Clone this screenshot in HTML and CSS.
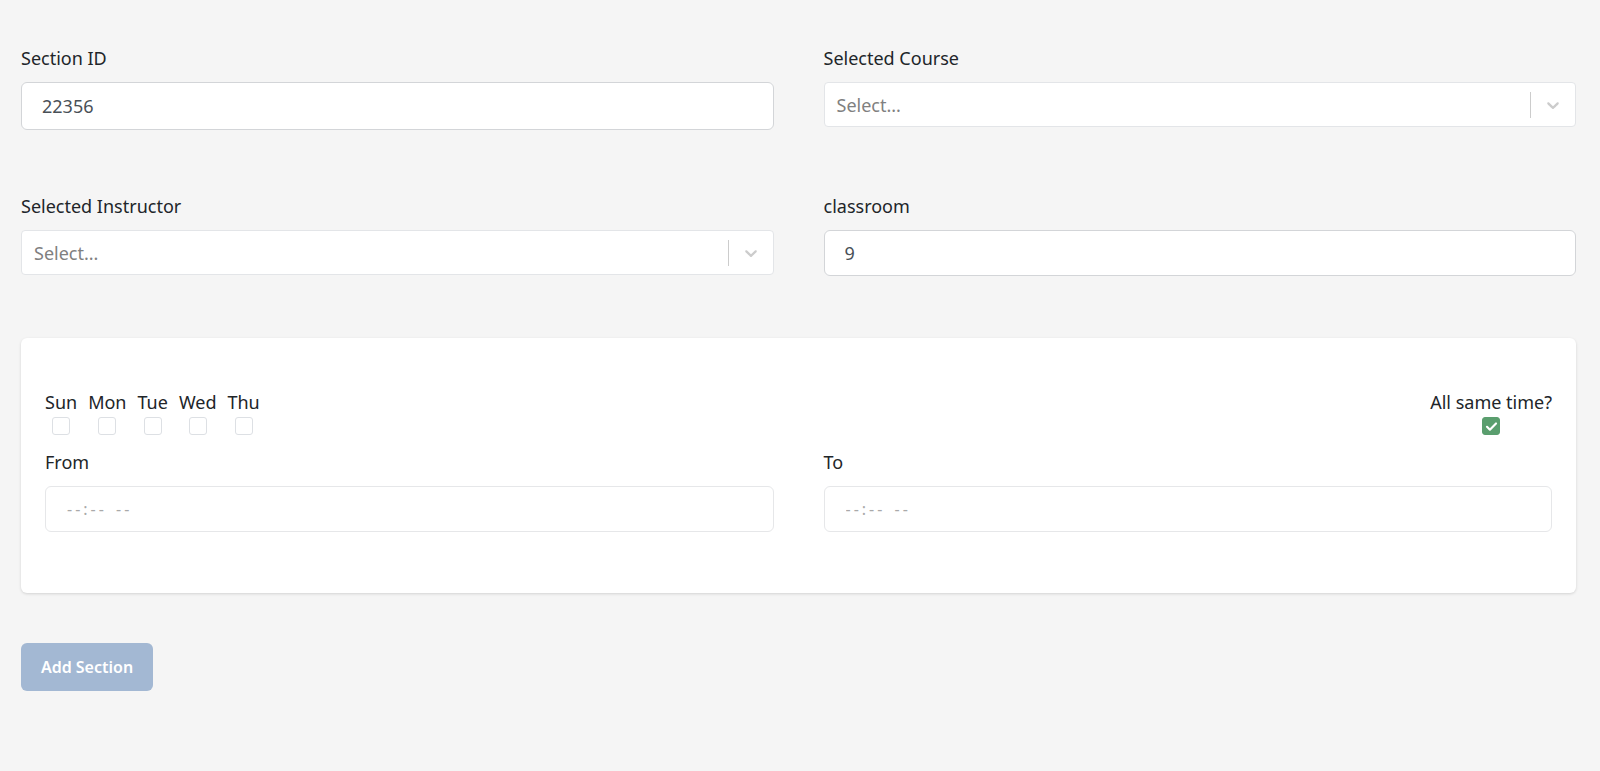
FILE: index.html
```html
<!DOCTYPE html>
<html lang="en">
<head>
<meta charset="utf-8">
<title>Add Section</title>
<link rel="stylesheet" href="styles.css">
</head>
<body>
<main class="page">
  <div class="row">
    <div class="field">
      <label class="label">Section ID</label>
      <input class="text-input tall" type="text" value="22356">
    </div>
    <div class="field">
      <label class="label">Selected Course</label>
      <div class="select">
        <span class="select-placeholder">Select...</span>
        <span class="select-sep"></span>
        <span class="select-arrow"><svg viewBox="0 0 20 20" width="20" height="20"><path d="M4.516 7.548c0.436-0.446 1.043-0.481 1.576 0l3.908 3.747 3.908-3.747c0.533-0.481 1.141-0.446 1.574 0 0.436 0.445 0.408 1.197 0 1.615-0.406 0.418-4.695 4.502-4.695 4.502-0.217 0.223-0.502 0.335-0.787 0.335s-0.57-0.112-0.789-0.335c0 0-4.287-4.084-4.695-4.502s-0.436-1.170 0-1.615z"/></svg></span>
      </div>
    </div>
  </div>
  <div class="row row-2">
    <div class="field">
      <label class="label">Selected Instructor</label>
      <div class="select">
        <span class="select-placeholder">Select...</span>
        <span class="select-sep"></span>
        <span class="select-arrow"><svg viewBox="0 0 20 20" width="20" height="20"><path d="M4.516 7.548c0.436-0.446 1.043-0.481 1.576 0l3.908 3.747 3.908-3.747c0.533-0.481 1.141-0.446 1.574 0 0.436 0.445 0.408 1.197 0 1.615-0.406 0.418-4.695 4.502-4.695 4.502-0.217 0.223-0.502 0.335-0.787 0.335s-0.57-0.112-0.789-0.335c0 0-4.287-4.084-4.695-4.502s-0.436-1.170 0-1.615z"/></svg></span>
      </div>
    </div>
    <div class="field">
      <label class="label">classroom</label>
      <input class="text-input" type="text" value="9">
    </div>
  </div>

  <section class="card">
    <div class="days-row">
      <div class="days">
        <label class="day"><span>Sun</span><span class="box"></span></label>
        <label class="day"><span>Mon</span><span class="box"></span></label>
        <label class="day"><span>Tue</span><span class="box"></span></label>
        <label class="day"><span>Wed</span><span class="box"></span></label>
        <label class="day"><span>Thu</span><span class="box"></span></label>
      </div>
      <label class="day same">
        <span>All same time?</span>
        <span class="box checked"><svg viewBox="0 0 16 16" width="15" height="15"><path d="M3.2 8.3l3.1 3.1L12.8 4.8" fill="none" stroke="#fff" stroke-width="2.3" stroke-linecap="round" stroke-linejoin="round"/></svg></span>
      </label>
    </div>
    <div class="row inner">
      <div class="field">
        <label class="label">From</label>
        <input class="time-input" type="text" placeholder="--:-- --">
      </div>
      <div class="field">
        <label class="label">To</label>
        <input class="time-input" type="text" placeholder="--:-- --">
      </div>
    </div>
  </section>

  <button class="btn" type="button">Add Section</button>
</main>
</body>
</html>
```
FILE: styles.css
```css
* { box-sizing: border-box; }
html, body { margin: 0; }
body {
  background: #f5f5f5;
  font-family: "Noto Sans", "Open Sans", "Liberation Sans", sans-serif;
  color: #212529;
  font-size: 18px;
}
.page {
  padding: 46px 24px 60px 21px;
}
.row {
  display: grid;
  grid-template-columns: 1fr 1fr;
  column-gap: 50px;
}
.row-2 { margin-top: 64px; }
.field {
  display: flex;
  flex-direction: column;
}
.label {
  font-size: 18px;
  line-height: 24px;
  margin-bottom: 12px;
}
.text-input {
  height: 46px;
  border: 1.5px solid #d3d5d8;
  border-radius: 6px;
  background: #fff;
  padding: 0 20px;
  font: inherit;
  font-size: 18px;
  color: #495057;
  outline: none;
}
.text-input.tall { height: 48px; }
.select {
  height: 45px;
  background: #fff;
  border: 1px solid #e3e5e8;
  border-radius: 4px;
  display: flex;
  align-items: center;
}
.select-placeholder {
  flex: 1;
  padding-left: 12px;
  color: #808080;
  font-size: 18px;
}
.select-sep {
  width: 1px;
  height: 26px;
  background: #cccccc;
}
.select-arrow {
  display: flex;
  padding: 0 12px 0 12px;
}
.select-arrow svg { fill: #cccccc; }

.card {
  margin-top: 62px;
  background: #fff;
  border-radius: 6px;
  box-shadow: 0 1px 3px rgba(0,0,0,0.14);
  padding: 52px 24px 61px 24px;
}
.days-row {
  display: flex;
  justify-content: space-between;
  align-items: flex-start;
}
.days {
  display: flex;
  gap: 11px;
}
.day {
  display: flex;
  flex-direction: column;
  align-items: center;
  font-size: 18px;
  line-height: 24px;
}
.box {
  margin-top: 3px;
  width: 18px;
  height: 18px;
  border: 1.5px solid #dde0e4;
  border-radius: 3px;
  background: #fff;
  display: flex;
  align-items: center;
  justify-content: center;
}
.box.checked {
  background: #5a9e6e;
  border-color: #5a9e6e;
}
.inner { margin-top: 15px; }
.time-input {
  height: 46px;
  border: 1px solid #e6e7e9;
  border-radius: 6px;
  background: #fff;
  padding: 0 21px;
  font: inherit;
  font-size: 16px;
  letter-spacing: 3px;
  word-spacing: 2px;
  outline: none;
}
.time-input::placeholder { color: #a9a9a9; }

.btn {
  margin-top: 50px;
  width: 132px;
  height: 48px;
  border: none;
  border-radius: 6px;
  background: #a3b8d3;
  color: #fff;
  font-family: inherit;
  font-size: 16px;
  font-weight: 600;
}
```
